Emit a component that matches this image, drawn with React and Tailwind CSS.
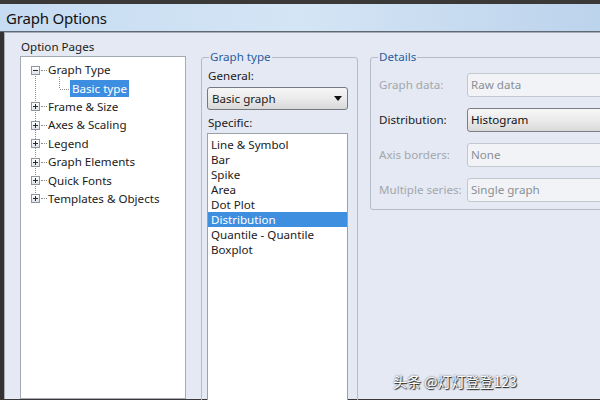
import React from "react";

const treeItems = [
  { label: "Graph Type", open: true },
  { label: "Basic type", child: true },
  { label: "Frame & Size" },
  { label: "Axes & Scaling" },
  { label: "Legend" },
  { label: "Graph Elements" },
  { label: "Quick Fonts" },
  { label: "Templates & Objects" },
];

const specific = [
  "Line & Symbol",
  "Bar",
  "Spike",
  "Area",
  "Dot Plot",
  "Distribution",
  "Quantile - Quantile",
  "Boxplot",
];

function ExpandBox({ open }) {
  return (
    <div className="relative z-10 w-[9px] h-[9px] border border-[#8e959e] bg-gradient-to-b from-white to-[#dfe3e8] flex items-center justify-center">
      <div className="absolute w-[5px] h-[1px] bg-[#2a2a2a]" />
      {!open && <div className="absolute w-[1px] h-[5px] bg-[#2a2a2a]" />}
    </div>
  );
}

function Detail({ label, value, active }) {
  return (
    <div className="flex items-center h-[24px]">
      <div
        className={
          "w-[88px] shrink-0 " + (active ? "text-[#1a1a1a]" : "text-[#a3a7ad]")
        }
      >
        {label}
      </div>
      <div
        className={
          "w-[200px] h-[24px] rounded-[3px] flex items-center pl-[3px] " +
          (active
            ? "border border-[#7b7f85] bg-gradient-to-b from-[#f7f7f7] via-[#ebebeb] to-[#d9d9d9] text-[#111]"
            : "border border-[#c3c8d0] bg-[#f1f3f7] text-[#8b8f95]")
        }
      >
        {value}
      </div>
    </div>
  );
}

export default function App() {
  return (
    <div
      className="w-[600px] h-[400px] overflow-hidden relative bg-[#3a3836] text-[11.6px] leading-[16px] text-[#1b1b1b]"
      style={{ fontFamily: '"Noto Sans", "Open Sans", sans-serif' }}
    >
      <div className="h-[4px] bg-[#3b3937]" />
      <div className="h-[28px] bg-gradient-to-r from-[#c6dcf2] via-[#d4e5f5] to-[#bcd3ec] flex items-center pl-[6px] border-b border-[#5f6873]">
        <span className="text-[15px] leading-[18px] text-[#111] tracking-[-0.2px]">
          Graph Options
        </span>
      </div>
      <div className="flex h-[367px]">
        <div className="w-[4px] bg-[#353331] shrink-0" />
        <div className="flex-1 bg-[#e4e9f3] border-l border-t border-[#a7aeb8] flex pl-[15px]">
          {/* Left column */}
          <div className="w-[166px] shrink-0 flex flex-col">
            <div className="mt-[6px] mb-[1px] h-[16px] pl-[1px]">Option Pages</div>
            <div className="relative flex-1 bg-white border border-[#a4abb5] pt-[4px]">
              <svg
                className="absolute left-0 top-0"
                width="166"
                height="160"
                viewBox="0 0 166 160"
              >
                <line
                  x1="14.5"
                  y1="19"
                  x2="14.5"
                  y2="143"
                  stroke="#8a8a8a"
                  strokeDasharray="1 1"
                />
                <line
                  x1="38.5"
                  y1="20"
                  x2="38.5"
                  y2="32"
                  stroke="#8a8a8a"
                  strokeDasharray="1 1"
                />
                <line
                  x1="39"
                  y1="32.5"
                  x2="49"
                  y2="32.5"
                  stroke="#8a8a8a"
                  strokeDasharray="1 1"
                />
              </svg>
              {treeItems.map((it) =>
                it.child ? (
                  <div key={it.label} className="h-[18.4px] flex items-center pl-[49px]">
                    <span className="bg-[#3d8ee0] text-white px-[2px] h-[17px] leading-[17px]">
                      {it.label}
                    </span>
                  </div>
                ) : (
                  <div key={it.label} className="h-[18.4px] flex items-center pl-[10px]">
                    <ExpandBox open={it.open} />
                    <div className="w-[6px] ml-[1px] border-t border-dotted border-[#8a8a8a]" />
                    <span className="ml-[1px]">{it.label}</span>
                  </div>
                )
              )}
            </div>
          </div>

          {/* Graph type group */}
          <fieldset className="ml-[15px] mt-[16px] w-[157px] shrink-0 border border-[#b4bcc7] rounded-[3px] h-[400px] px-0">
            <legend className="ml-[7px] px-[1px] text-[#2a5e9e] leading-[16px]">
              Graph type
            </legend>
            <div className="pl-[5px] flex flex-col">
              <div className="mt-[3px] pl-[1px] h-[16px]">General:</div>
              <div className="mt-[3px] w-[141px] h-[23px] rounded-[3px] border border-[#767a80] bg-gradient-to-b from-[#f6f6f6] via-[#ebebeb] to-[#d8d8d8] flex items-center justify-between pl-[4px] pr-[5px]">
                <span>Basic graph</span>
                <svg width="8" height="5" viewBox="0 0 8 5">
                  <path d="M0 0 H8 L4 5 Z" fill="#111" />
                </svg>
              </div>
              <div className="mt-[5px] pl-[1px] h-[16px]">Specific:</div>
              <div className="mt-[2px] w-[141px] h-[300px] bg-white border border-[#9aa1ab] pt-[3px]">
                {specific.map((s) => (
                  <div
                    key={s}
                    className={
                      "h-[15px] leading-[15px] pl-[3px] " +
                      (s === "Distribution" ? "bg-[#3f8fe0] text-white" : "")
                    }
                  >
                    {s}
                  </div>
                ))}
              </div>
            </div>
          </fieldset>

          {/* Details group */}
          <fieldset className="ml-[12px] mt-[16px] w-[260px] shrink-0 border border-[#b4bcc7] rounded-[3px] h-[161px] px-0">
            <legend className="ml-[7px] px-[1px] text-[#2a5e9e] leading-[16px]">
              Details
            </legend>
            <div className="pl-[8px] pt-[8px] flex flex-col gap-[11px]">
              <Detail label="Graph data:" value="Raw data" />
              <Detail label="Distribution:" value="Histogram" active />
              <Detail label="Axis borders:" value="None" />
              <Detail label="Multiple series:" value="Single graph" />
            </div>
          </fieldset>
        </div>
      </div>

      <div
        className="absolute left-[393px] top-[372px] text-[14px] leading-[18px] text-white [text-shadow:1px_1px_1px_#222,0_0_2px_#444]"
        style={{ fontFamily: '"Noto Sans CJK SC", "Noto Sans", sans-serif' }}
      >
        头条 @灯灯登登123
      </div>
    </div>
  );
}
